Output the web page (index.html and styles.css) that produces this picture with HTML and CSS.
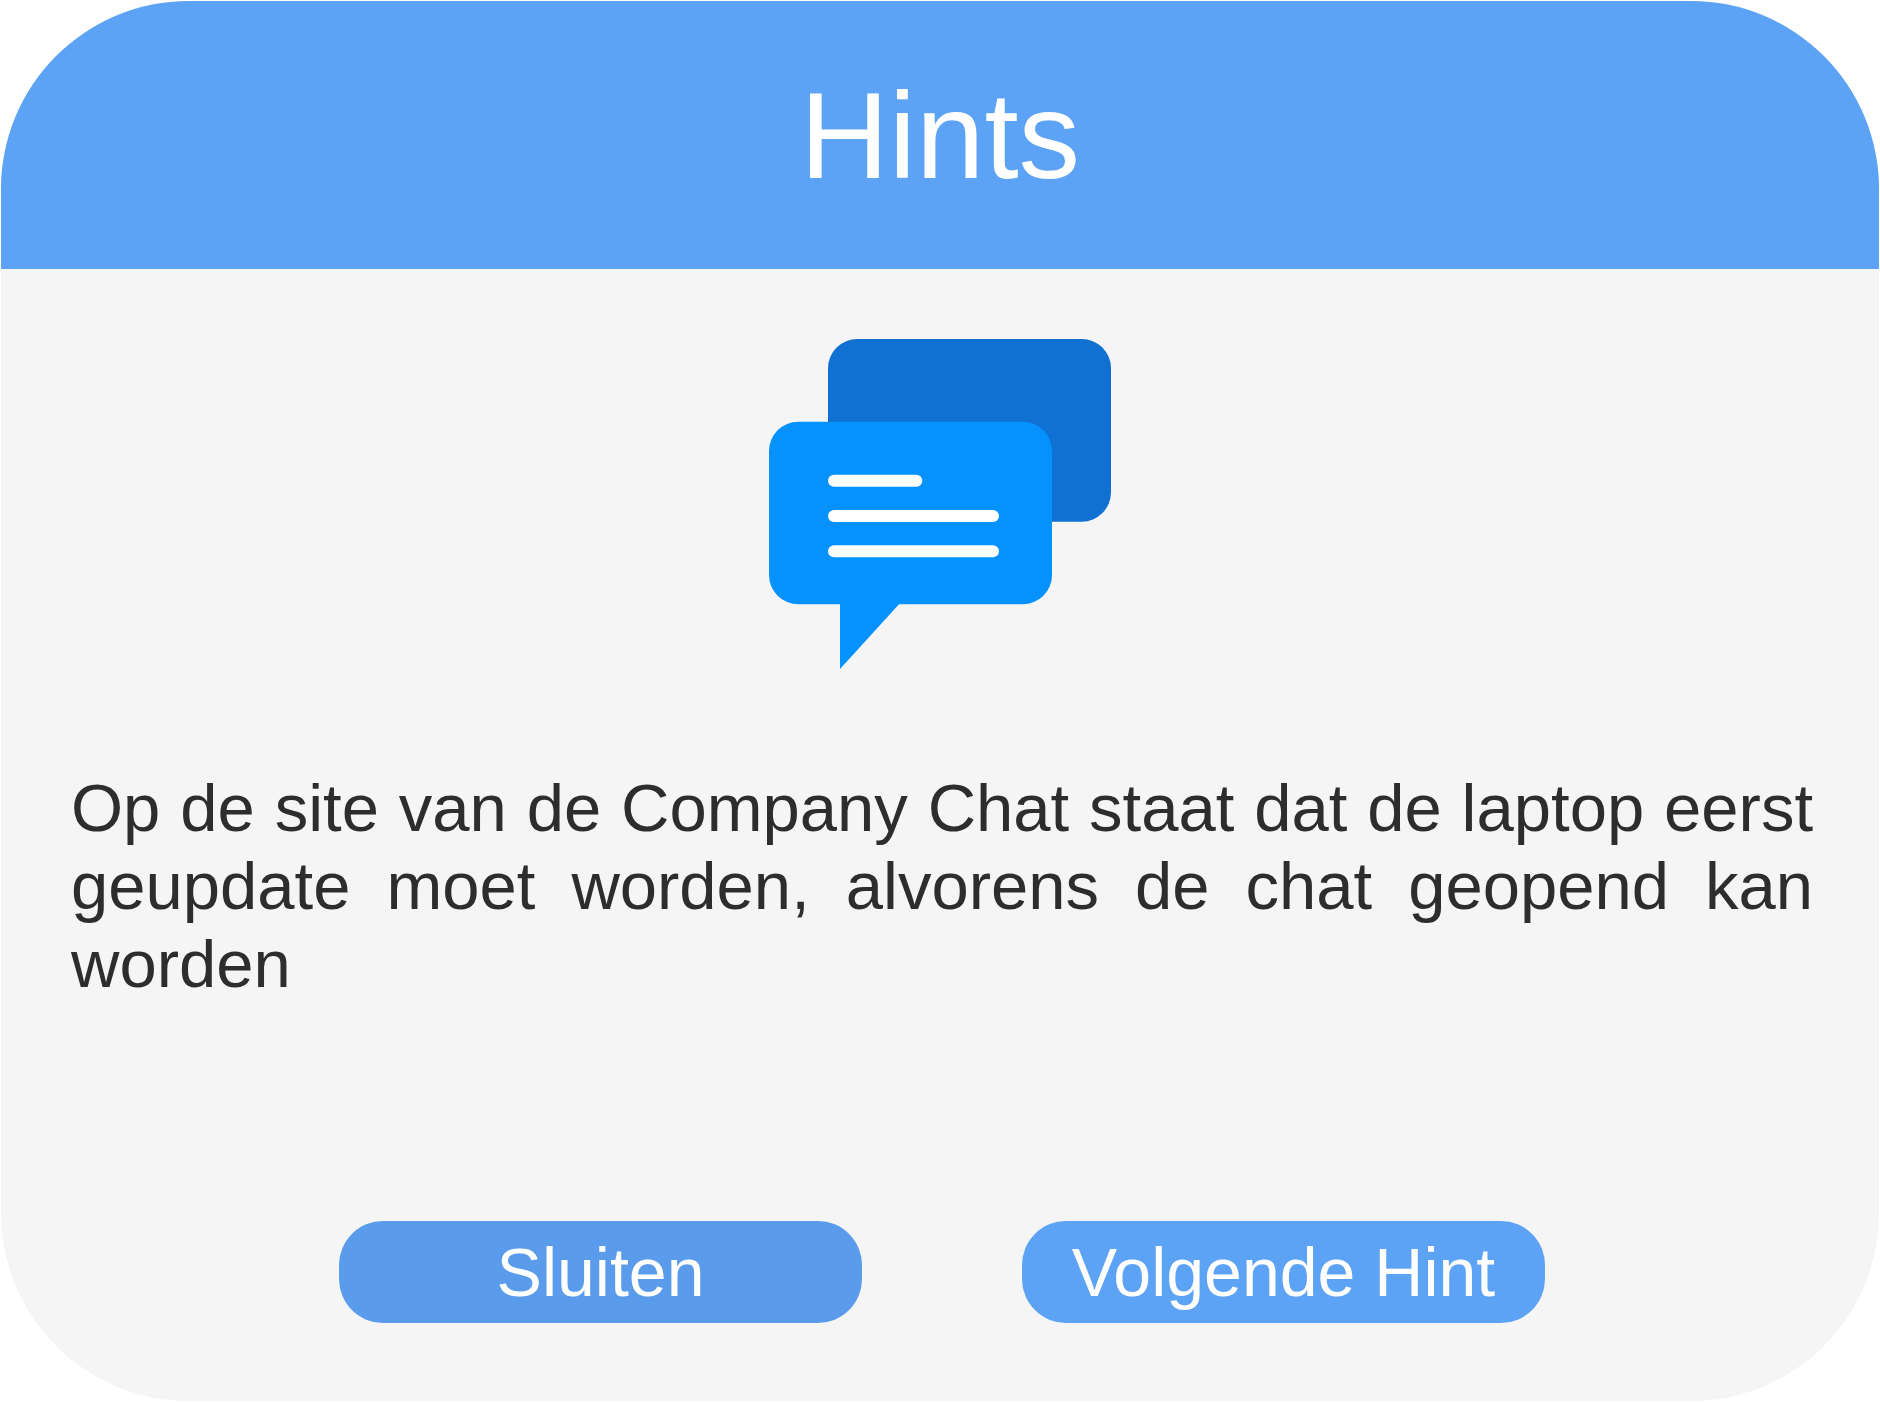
FILE: index.html
```html
<!DOCTYPE html>
<html lang="nl">
<head>
<meta charset="utf-8">
<meta name="viewport" content="width=device-width, initial-scale=1">
<title>Hints</title>
<link rel="stylesheet" href="styles.css">
</head>
<body>
<main class="card">
  <header class="card-header">
    <h1 class="card-title">Hints</h1>
  </header>
  <section class="card-body">
    <svg class="chat-icon" viewBox="87 58 1026 990" aria-hidden="true">
      <rect x="264" y="58" width="849" height="548" rx="88" fill="#1171d3"/>
      <path fill="#0592ff" d="M175 306H848A88 88 0 0 1 936 394V766A88 88 0 0 1 848 854H477L300 1048V854H175A88 88 0 0 1 87 766V394A88 88 0 0 1 175 306Z"/>
      <g fill="#fff">
        <rect x="264" y="465" width="283" height="36" rx="18"/>
        <rect x="264" y="571" width="513" height="36" rx="18"/>
        <rect x="264" y="677" width="513" height="36" rx="18"/>
      </g>
    </svg>
    <p class="hint-text">Op de site van de Company Chat staat dat de laptop eerst geupdate moet worden, alvorens de chat geopend kan worden</p>
    <div class="actions">
      <button type="button" class="button button-close">Sluiten</button>
      <button type="button" class="button">Volgende Hint</button>
    </div>
  </section>
</main>
</body>
</html>
```
FILE: styles.css
```css
* {
  box-sizing: border-box;
}

body {
  margin: 0;
  padding: 1px 1px 2px;
  min-height: 100vh;
  display: flex;
  background: #fff;
  font-family: "Liberation Sans", Arial, sans-serif;
}

.card {
  flex: 1;
  display: flex;
  flex-direction: column;
  border-radius: 188px;
  overflow: hidden;
  background: #f5f5f5;
}

.card-header {
  padding: 64px 0 63px;
  background: #5ca2f5;
  text-align: center;
}

.card-title {
  margin: 0;
  font-size: 123px;
  line-height: 141px;
  font-weight: 400;
  color: #fff;
}

.card-body {
  flex: 1;
  display: flex;
  flex-direction: column;
  align-items: center;
  padding: 70px 64px 78px;
}

.chat-icon {
  width: 342px;
  height: 330px;
}

.hint-text {
  align-self: stretch;
  margin: 100px 0 60px;
  padding: 0 2px 0 6px;
  font-size: 67px;
  line-height: 78px;
  text-align: justify;
  color: #2d2d2d;
}

.actions {
  display: flex;
  flex-wrap: wrap;
  justify-content: center;
  gap: 40px 160px;
  margin-top: auto;
  padding-left: 4px;
}

.button {
  width: 523px;
  height: 102px;
  padding: 0;
  border: 0;
  border-radius: 44px;
  background: #5ca2f5;
  font: inherit;
  font-size: 68px;
  line-height: 78px;
  color: #fff;
}

.button-close {
  background: #5a9ceb;
}
```
